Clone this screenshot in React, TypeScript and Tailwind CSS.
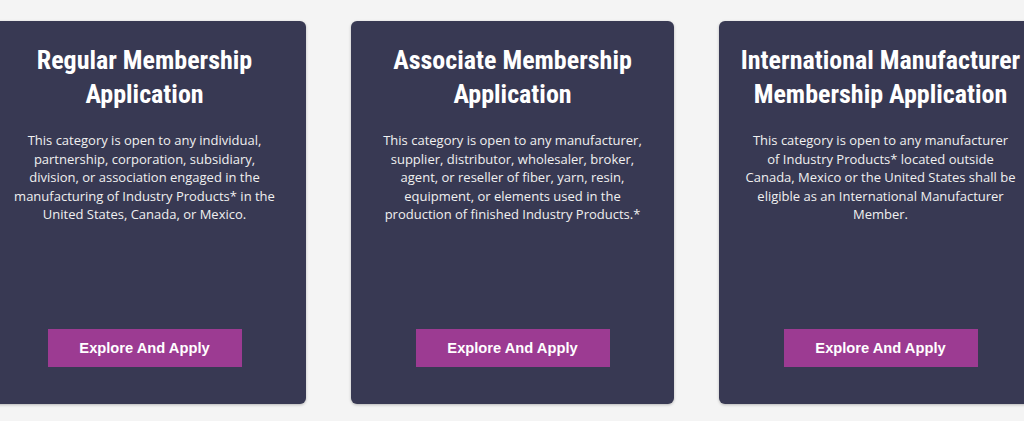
const cards = [
  {
    title: "Regular Membership Application",
    body: "This category is open to any individual, partnership, corporation, subsidiary, division, or association engaged in the manufacturing of Industry Products* in the United States, Canada, or Mexico.",
  },
  {
    title: "Associate Membership Application",
    body: "This category is open to any manufacturer, supplier, distributor, wholesaler, broker, agent, or reseller of fiber, yarn, resin, equipment, or elements used in the production of finished Industry Products.*",
  },
  {
    title: "International Manufacturer Membership Application",
    body: "This category is open to any manufacturer of Industry Products* located outside Canada, Mexico or the United States shall be eligible as an International Manufacturer Member.",
  },
];

export default function App() {
  return (
    <div className="w-[1024px] h-[421px] overflow-hidden bg-[#f4f4f4]">
      <div className="flex justify-center gap-[45px] pt-[21px] pl-px">
        {cards.map((c) => (
          <div
            key={c.title}
            className="flex flex-col items-center w-[323px] h-[383px] shrink-0 rounded-md bg-[#383953] shadow-[0_1px_3px_rgba(0,0,0,0.25)] px-[18px] pt-[22px] pb-[37px] text-center"
          >
            <h2
              className="text-[26px] leading-[34px] font-bold text-white [font-stretch:condensed]"
              style={{ fontFamily: '"Roboto Condensed", "Liberation Sans Narrow", "DejaVu Sans Condensed", Roboto, sans-serif' }}
            >
              {c.title}
            </h2>
            <p className="mt-[20px] w-[270px] text-[13px] leading-[18.5px] text-[#f0f0f0] font-['Open_Sans',sans-serif]">
              {c.body}
            </p>
            <button className="mt-auto w-[194px] h-[38px] bg-[#9c3b92] text-white text-[14.7px] font-bold font-['Liberation_Sans',Arial,sans-serif]">
              Explore And Apply
            </button>
          </div>
        ))}
      </div>
    </div>
  );
}
